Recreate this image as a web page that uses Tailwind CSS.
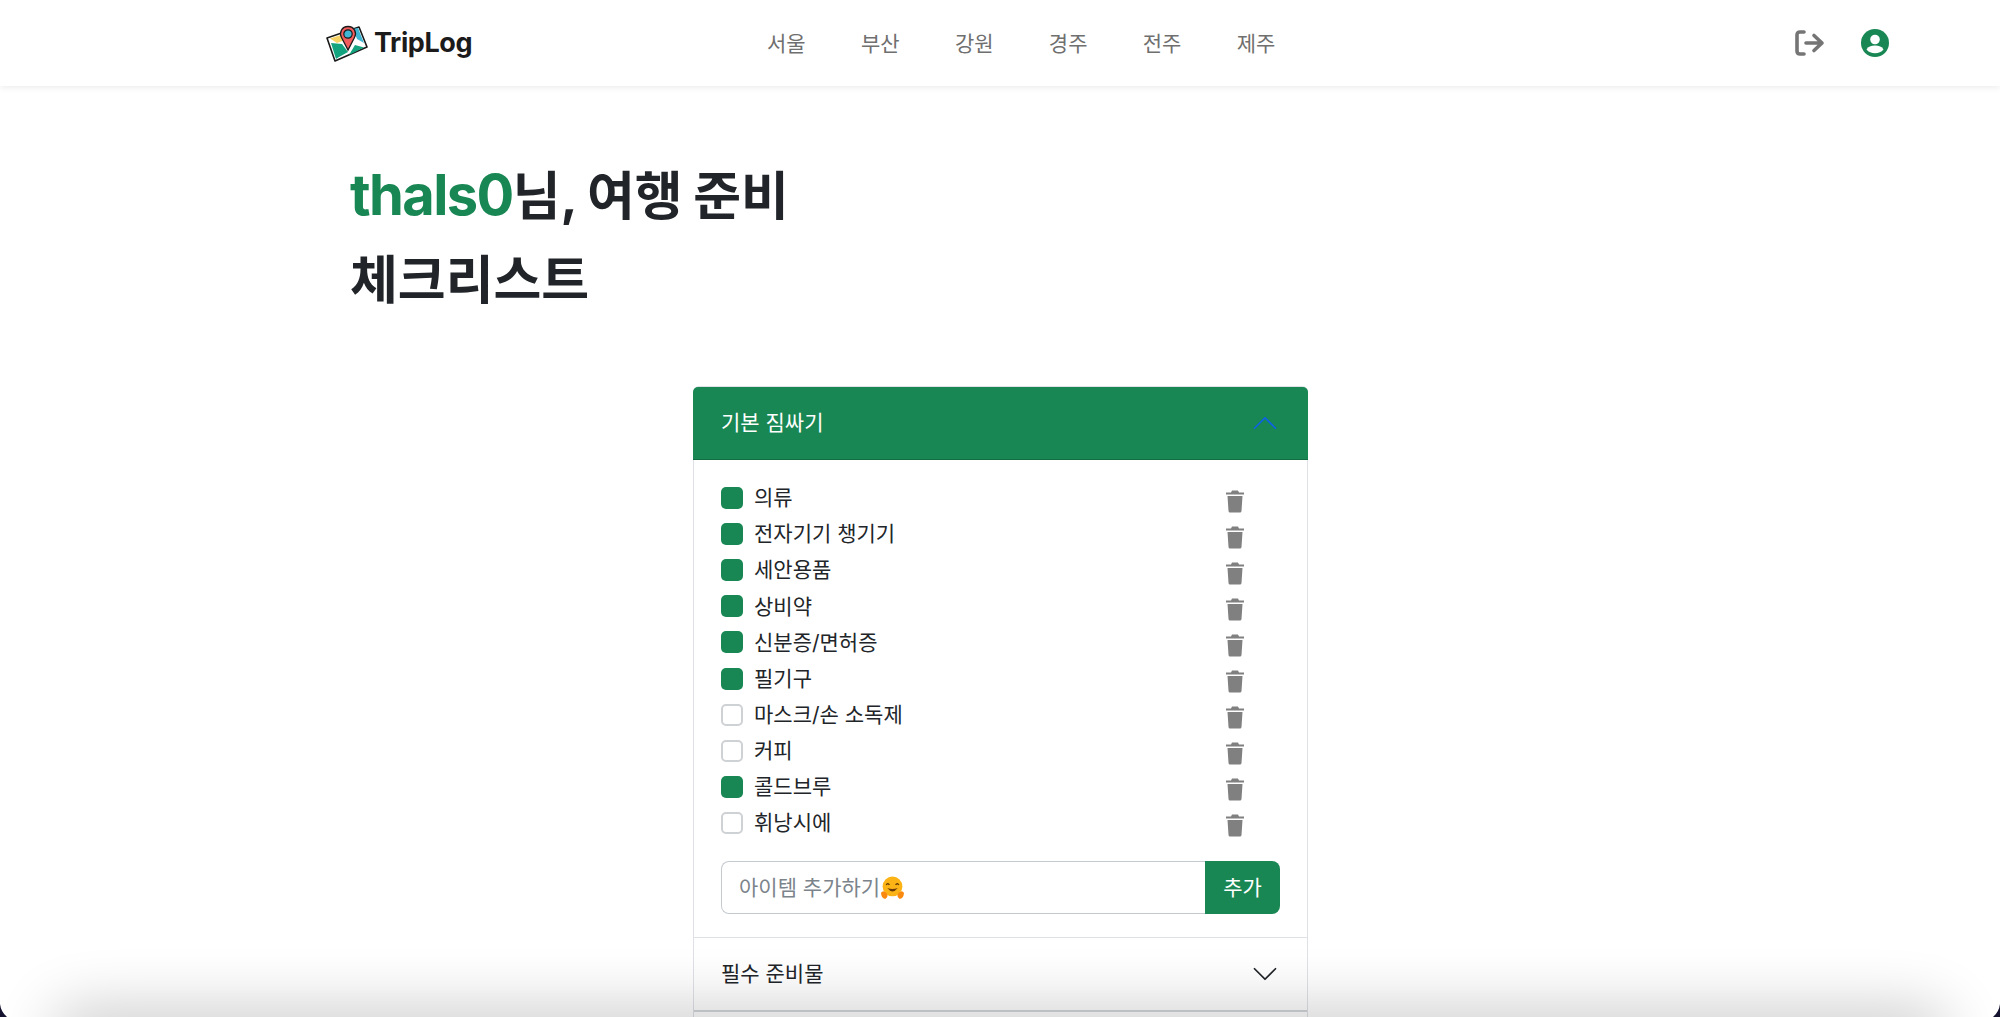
<!DOCTYPE html>
<html lang="ko"><head><meta charset="utf-8"><script src="https://cdn.jsdelivr.net/npm/@tailwindcss/browser@4"></script></head>
<body class="bg-white">
<div class="relative h-[1017px] w-[2000px] overflow-hidden font-['Inter','Noto_Sans_CJK_KR',sans-serif] text-[#212529]">
  <nav class="relative z-10 flex h-[86px] items-center bg-white pl-[326px] pr-[111px] shadow-[0_2px_6px_rgba(0,0,0,0.07)]">
    <div class="flex w-[441px] flex-none items-center gap-[6px]">
      <svg width="42" height="38" viewBox="0 0 42 38"><path d="M1 14 L33 3 L41 23 L9 37 Z" fill="#fff" stroke="#1a1a1a" stroke-width="1.600" stroke-linejoin="round"/><path d="M4 14.500 L15 11 L19 16 L11 19Z" fill="#f6d365"/><path d="M5 19 L16 20 L22 28 L13 33 L10 35Z" fill="#14a37f"/><path d="M23 31 L29 21 L38 23.500Z" fill="#14a37f"/><path d="M27 5 L32 4 L38 19 L31 15Z" fill="#3fb6d3"/><path d="M22 2.500 C15.500 2.500 13 9 15.500 13.500 L22 26 L28.500 13.500 C31 9 28.500 2.500 22 2.500Z" fill="#f25c5c" stroke="#1a1a1a" stroke-width="1.300"/><circle cx="22" cy="10" r="4.200" fill="#3fb6d3" stroke="#1a1a1a" stroke-width="1.200"/></svg>
      <span class="text-[27px] font-bold tracking-[-0.4px] text-[#1b1b1b]">TripLog</span>
    </div>
    <div class="flex gap-[55.300px] whitespace-nowrap pt-[1px] text-[21px] text-[#6f6f6f]"><span>서울</span><span>부산</span><span>강원</span><span>경주</span><span>전주</span><span>제주</span></div>
    <div class="ml-auto flex items-center gap-[36px]">
      <svg width="30" height="28" viewBox="0 0 30 28" fill="none" stroke="#757575" stroke-width="3.600" stroke-linecap="round" stroke-linejoin="round"><path d="M9 3H5Q2 3 2 6V22Q2 25 5 25H9"/><path d="M11 14H26M19 6.500L27 14L19 21.500"/></svg>
      <svg width="28" height="28" viewBox="0 0 28 28"><circle cx="14" cy="14" r="14" fill="#198754"/><circle cx="14" cy="10.500" r="4.800" fill="#fff"/><path d="M5.500 20.500C7 17.500 10 16.500 14 16.500S21 17.500 22.500 20.500C20.500 23 17.500 24.300 14 24.300S7.500 23 5.500 20.500Z" fill="#fff"/></svg>
    </div>
  </nav>
  <main class="pl-[350px]">
    <h1 class="mt-[67px] text-[52px] leading-[84px] font-bold [word-spacing:-1.700px]"><span class="text-[56px] tracking-[-1.600px] text-[#198754]">thals0</span>님, 여행 준비<br>체크리스트</h1>
  </main>
  <section class="absolute left-[693px] top-[386px] w-[615px] rounded-[6px] border border-[#dee2e6] bg-white">
    <div class="-mx-px flex h-[73px] items-center justify-between rounded-t-[5px] border-b border-[#146c43] bg-[#198754] pl-[28px] pr-[29px] text-[21px] text-white">
      <span>기본 짐싸기</span>
      <svg width="28" height="28" viewBox="0 0 16 16" fill="#0c63e4"><path fill-rule="evenodd" d="M14.354 11.354a.5.5 0 0 1-.708 0L8 5.707 2.354 11.354a.5.5 0 0 1-.708-.708l6-6a.5.5 0 0 1 .708 0l6 6a.5.5 0 0 1 0 .708z"/></svg>
    </div>
    <div class="border-b border-[#dee2e6] px-[27px] pt-[20px] pb-[23px] text-[21px]">
      <ul class="flex flex-col">
        <li class="flex h-[36.100px] items-center"><span class="h-[22px] w-[22px] rounded-[5px] bg-[#198754]"></span><span class="ml-[11px] flex-1">의류</span><svg class="mr-[35px] mt-[5px]" width="20" height="24" viewBox="0 0 20 24" fill="#808080"><path d="M7 1.500h6l1 2h5v2H1v-2h5z"/><path d="M2.500 7h15l-1 15q-.1 1.500-1.500 1.500H5q-1.400 0-1.500-1.500z"/></svg></li>
        <li class="flex h-[36.100px] items-center"><span class="h-[22px] w-[22px] rounded-[5px] bg-[#198754]"></span><span class="ml-[11px] flex-1">전자기기 챙기기</span><svg class="mr-[35px] mt-[5px]" width="20" height="24" viewBox="0 0 20 24" fill="#808080"><path d="M7 1.500h6l1 2h5v2H1v-2h5z"/><path d="M2.500 7h15l-1 15q-.1 1.500-1.500 1.500H5q-1.400 0-1.500-1.500z"/></svg></li>
        <li class="flex h-[36.100px] items-center"><span class="h-[22px] w-[22px] rounded-[5px] bg-[#198754]"></span><span class="ml-[11px] flex-1">세안용품</span><svg class="mr-[35px] mt-[5px]" width="20" height="24" viewBox="0 0 20 24" fill="#808080"><path d="M7 1.500h6l1 2h5v2H1v-2h5z"/><path d="M2.500 7h15l-1 15q-.1 1.500-1.500 1.500H5q-1.400 0-1.500-1.500z"/></svg></li>
        <li class="flex h-[36.100px] items-center"><span class="h-[22px] w-[22px] rounded-[5px] bg-[#198754]"></span><span class="ml-[11px] flex-1">상비약</span><svg class="mr-[35px] mt-[5px]" width="20" height="24" viewBox="0 0 20 24" fill="#808080"><path d="M7 1.500h6l1 2h5v2H1v-2h5z"/><path d="M2.500 7h15l-1 15q-.1 1.500-1.500 1.500H5q-1.400 0-1.500-1.500z"/></svg></li>
        <li class="flex h-[36.100px] items-center"><span class="h-[22px] w-[22px] rounded-[5px] bg-[#198754]"></span><span class="ml-[11px] flex-1">신분증/면허증</span><svg class="mr-[35px] mt-[5px]" width="20" height="24" viewBox="0 0 20 24" fill="#808080"><path d="M7 1.500h6l1 2h5v2H1v-2h5z"/><path d="M2.500 7h15l-1 15q-.1 1.500-1.500 1.500H5q-1.400 0-1.500-1.500z"/></svg></li>
        <li class="flex h-[36.100px] items-center"><span class="h-[22px] w-[22px] rounded-[5px] bg-[#198754]"></span><span class="ml-[11px] flex-1">필기구</span><svg class="mr-[35px] mt-[5px]" width="20" height="24" viewBox="0 0 20 24" fill="#808080"><path d="M7 1.500h6l1 2h5v2H1v-2h5z"/><path d="M2.500 7h15l-1 15q-.1 1.500-1.500 1.500H5q-1.400 0-1.500-1.500z"/></svg></li>
        <li class="flex h-[36.100px] items-center"><span class="h-[22px] w-[22px] rounded-[5px] border-2 border-[#cfd2d5]"></span><span class="ml-[11px] flex-1">마스크/손 소독제</span><svg class="mr-[35px] mt-[5px]" width="20" height="24" viewBox="0 0 20 24" fill="#808080"><path d="M7 1.500h6l1 2h5v2H1v-2h5z"/><path d="M2.500 7h15l-1 15q-.1 1.500-1.500 1.500H5q-1.400 0-1.500-1.500z"/></svg></li>
        <li class="flex h-[36.100px] items-center"><span class="h-[22px] w-[22px] rounded-[5px] border-2 border-[#cfd2d5]"></span><span class="ml-[11px] flex-1">커피</span><svg class="mr-[35px] mt-[5px]" width="20" height="24" viewBox="0 0 20 24" fill="#808080"><path d="M7 1.500h6l1 2h5v2H1v-2h5z"/><path d="M2.500 7h15l-1 15q-.1 1.500-1.500 1.500H5q-1.400 0-1.500-1.500z"/></svg></li>
        <li class="flex h-[36.100px] items-center"><span class="h-[22px] w-[22px] rounded-[5px] bg-[#198754]"></span><span class="ml-[11px] flex-1">콜드브루</span><svg class="mr-[35px] mt-[5px]" width="20" height="24" viewBox="0 0 20 24" fill="#808080"><path d="M7 1.500h6l1 2h5v2H1v-2h5z"/><path d="M2.500 7h15l-1 15q-.1 1.500-1.500 1.500H5q-1.400 0-1.500-1.500z"/></svg></li>
        <li class="flex h-[36.100px] items-center"><span class="h-[22px] w-[22px] rounded-[5px] border-2 border-[#cfd2d5]"></span><span class="ml-[11px] flex-1">휘낭시에</span><svg class="mr-[35px] mt-[5px]" width="20" height="24" viewBox="0 0 20 24" fill="#808080"><path d="M7 1.500h6l1 2h5v2H1v-2h5z"/><path d="M2.500 7h15l-1 15q-.1 1.500-1.500 1.500H5q-1.400 0-1.500-1.500z"/></svg></li>
      </ul>
      <div class="mt-[20px] flex h-[53px]">
        <div class="flex flex-1 items-center rounded-l-[8px] border border-r-0 border-[#c5cad0] pl-[17px] text-[#7c848b]">아이템 추가하기<svg width="25" height="25" viewBox="0 0 24 24"><circle cx="12" cy="11" r="9.500" fill="#fbb316"/><path d="M6 9.500Q7.500 7 9 9.500M15 9.500Q16.500 7 18 9.500" fill="none" stroke="#5a3300" stroke-width="1.300"/><path d="M7 12.500Q12 19 17 12.500Q12 14.500 7 12.500Z" fill="#6b3a06"/><path d="M1 17Q3 14 6 17T5 23Q1 22 1 17ZM23 17Q21 14 18 17T19 23Q23 22 23 17Z" fill="#f98a0f"/></svg></div>
        <div class="flex w-[75px] items-center justify-center rounded-r-[8px] bg-[#198754] text-white">추가</div>
      </div>
    </div>
    <div class="flex h-[72px] items-center justify-between pl-[27px] pr-[28px] text-[21px]">
      <span>필수 준비물</span>
      <svg width="28" height="28" viewBox="0 0 16 16" fill="#212529"><path fill-rule="evenodd" d="M1.646 4.646a.5.5 0 0 1 .708 0L8 10.293l5.646-5.647a.5.5 0 0 1 .708.708l-6 6a.5.5 0 0 1-.708 0l-6-6a.5.5 0 0 1 0-.708z"/></svg>
    </div>
    <div class="h-[60px] border-t-2 border-[#d3d6da]"></div>
  </section>
  <div class="absolute -bottom-[40px] left-[60px] right-[60px] z-20 h-[40px] rounded-[24px] shadow-[0_0_60px_10px_rgba(0,0,0,0.2)]"></div>
  <svg class="absolute bottom-0 left-0 z-30" width="7" height="13" viewBox="0 0 7 13" fill="#14122e"><path d="M0 0Q1 8 7 13H0Z"/></svg>
  <svg class="absolute bottom-0 right-0 z-30" width="7" height="13" viewBox="0 0 7 13" fill="#14122e"><path d="M7 0Q6 8 0 13H7Z"/></svg>
</div>
</body></html>
